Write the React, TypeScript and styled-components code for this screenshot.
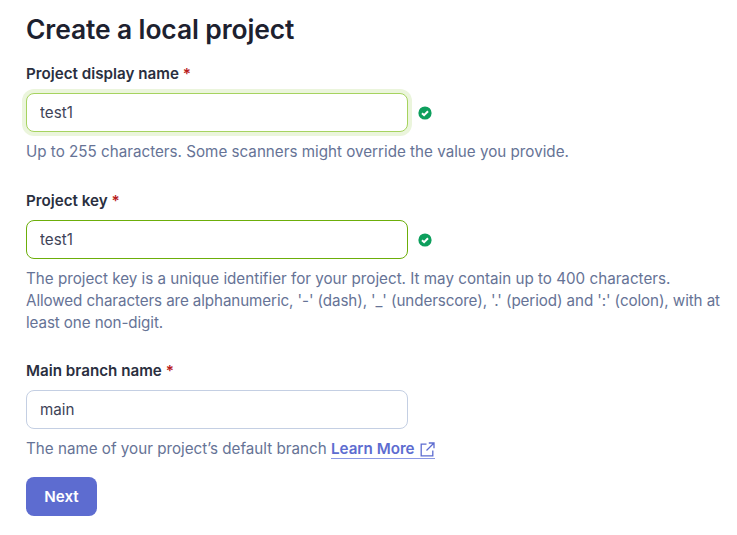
import { createGlobalStyle } from 'styled-components';
import styled from 'styled-components';

const Global = createGlobalStyle`
	html, body {
		margin: 0;
		padding: 0;
		background: #fff;
		font-family: Inter, "Liberation Sans", sans-serif;
	}
`;

const Page = styled.div`
	display: flex;
	flex-direction: column;
	width: 737px;
	height: 535px;
	padding: 12px 0 0 26px;
	box-sizing: border-box;
	overflow: hidden;
`;

const Title = styled.h1`
	margin: 0 0 18px;
	font-size: 26.4px;
	line-height: 34px;
	font-weight: 600;
	letter-spacing: -0.1px;
	color: #1d212f;
`;

const Field = styled.div<{ gap: number }>`
	display: flex;
	flex-direction: column;
	margin-bottom: ${({ gap }) => gap}px;
`;

const Label = styled.label`
	font-size: 15.2px;
	line-height: 20px;
	font-weight: 600;
	color: #2a2f40;
	margin-bottom: 9px;
`;

const Required = styled.span`
	color: #b81c1c;
`;

const InputRow = styled.div`
	display: flex;
	align-items: center;
	gap: 10px;
`;

const Input = styled.input<{ state: 'default' | 'valid' | 'focus' }>`
	width: 382px;
	height: 39px;
	box-sizing: border-box;
	padding: 0 13px;
	border-radius: 8px;
	border: 1px solid ${({ state }) => (state === 'default' ? '#c4cfe3' : state === 'focus' ? '#a6d35f' : '#6cae0a')};
	box-shadow: ${({ state }) => (state === 'focus' ? '0 0 0 4px #ebf5dc' : 'none')};
	outline: none;
	background: #fff;
	font-family: inherit;
	font-size: 15.2px;
	color: #3e4357;
`;

const Help = styled.p`
	margin: 9px 0 0;
	width: 700px;
	font-size: 15.2px;
	line-height: 22px;
	color: #667396;
`;

const Tight = styled.span`
	letter-spacing: -0.1px;
`;

const DocLink = styled.a`
	display: inline-flex;
	align-items: center;
	gap: 5px;
	font-weight: 600;
	color: #5d6cd0;
	text-decoration: none;
	border-bottom: 1px solid #8c98e4;
	line-height: 18px;
`;

const NextButton = styled.button`
	align-self: flex-start;
	width: 71px;
	height: 39px;
	border: none;
	border-radius: 8px;
	background: #5d6cd0;
	color: #fff;
	font-family: inherit;
	font-size: 15.2px;
	font-weight: 600;
`;

const ValidIcon = () => (
	<svg width="14" height="14" viewBox="0 0 14 14" aria-hidden="true">
		<circle cx="7" cy="7" r="6.6" fill="#0d9f5d" />
		<path d="M4 7.2l2.1 2L10 5.2" fill="none" stroke="#fff" strokeWidth="2" />
	</svg>
);

const ExternalIcon = () => (
	<svg width="15" height="15" viewBox="0 0 15 15" fill="none" stroke="#5d6cd0" strokeWidth="1.3" aria-hidden="true">
		<path d="M6.5 2.2H1.2v11.6h11.6V8.5" />
		<path d="M8.8 1h5.2v5.2M14 1L6.5 8.5" />
	</svg>
);

export default function App() {
	return (
		<Page>
			<Global />
			<Title>Create a local project</Title>
			<Field gap={28}>
				<Label>
					Project display name <Required>*</Required>
				</Label>
				<InputRow>
					<Input state="focus" defaultValue="test1" />
					<ValidIcon />
				</InputRow>
				<Help>Up to 255 characters. Some scanners might override the value you provide.</Help>
			</Field>
			<Field gap={27}>
				<Label>
					Project key <Required>*</Required>
				</Label>
				<InputRow>
					<Input state="valid" defaultValue="test1" />
					<ValidIcon />
				</InputRow>
				<Help>
					The project key is a unique identifier for your project. It may contain up to 400 characters.{' '}
					<Tight>
						Allowed characters are alphanumeric, '-' (dash), '_' (underscore), '.' (period) and ':' (colon), with at least
						one non-digit.
					</Tight>
				</Help>
			</Field>
			<Field gap={17}>
				<Label>
					Main branch name <Required>*</Required>
				</Label>
				<InputRow>
					<Input state="default" defaultValue="main" />
				</InputRow>
				<Help>
					The name of your project’s default branch{' '}
					<DocLink href="#">
						Learn More <ExternalIcon />
					</DocLink>
				</Help>
			</Field>
			<NextButton>Next</NextButton>
		</Page>
	);
}
